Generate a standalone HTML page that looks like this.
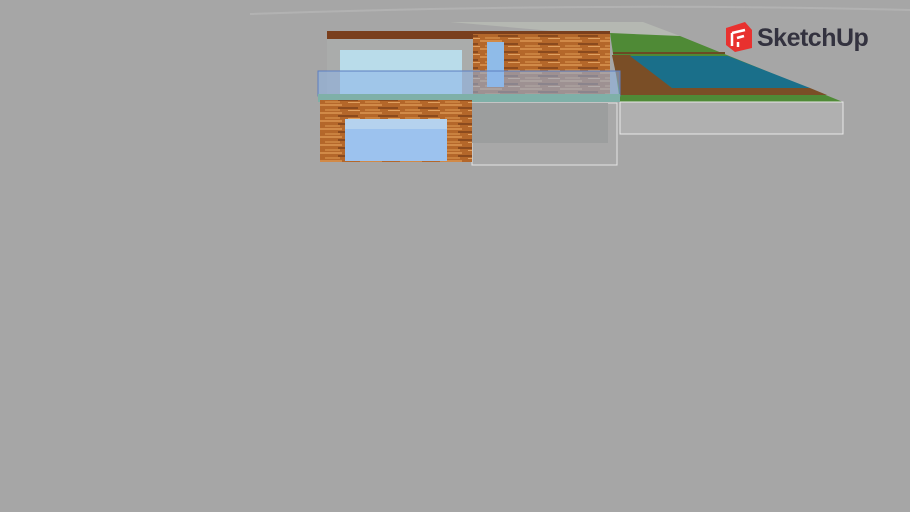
<!DOCTYPE html>
<html><head><style>
html,body{margin:0;padding:0;width:910px;height:512px;overflow:hidden;background:#a6a6a6;}
svg{position:absolute;left:0;top:0}
.logo{position:absolute;left:757px;top:24px;font:bold 25px "Liberation Sans",sans-serif;color:#33323f;letter-spacing:-0.5px}
</style></head><body>
<svg width="910" height="512">
<defs>
<pattern id="wood" width="40" height="8" patternUnits="userSpaceOnUse">
<rect width="40" height="8" fill="#b4672a"/>
<rect x="0" y="0" width="22" height="2" fill="#d18a48"/>
<rect x="18" y="3" width="20" height="2" fill="#8a4a1e"/>
<rect x="5" y="5" width="15" height="2" fill="#c9813f"/>
<rect x="28" y="6" width="12" height="1" fill="#e0a060"/>
</pattern>
</defs>
<path d="M250 14 Q600 2 910 10" stroke="#b2b2b2" stroke-width="2" fill="none"/>
<!-- back slab -->
<polygon points="450,22 643,22 680,36 610,36" fill="#b5b8b2"/>
<!-- grass -->
<polygon points="610,33 680,36 843,102 620,102" fill="#4f8a36"/>
<line x1="613" y1="53" x2="725" y2="53" stroke="#6b4a24" stroke-width="2"/>
<!-- deck wedge -->
<polygon points="612,55 630,55 672,88 620,93" fill="#7a4e26"/>
<!-- strip below pool -->
<polygon points="620,88 810,88 827,95 620,95" fill="#7a4e26"/>
<!-- pool -->
<polygon points="630,56 728,56 810,88 672,88" fill="#1a6f8a"/>
<!-- base side -->
<polygon points="620,102 843,102 843,134 620,134" fill="#b0b0b0" stroke="#e8e8e8"/>
<!-- lower right box -->
<polygon points="472,103 617,103 617,165 472,165" fill="#a8a8a8" stroke="#e4e4e4"/>
<rect x="472" y="103" width="136" height="40" fill="#9c9e9e"/>
<!-- upper left block -->
<rect x="327" y="33" width="146" height="67" fill="#aaacab"/>
<rect x="327" y="31" width="146" height="8" fill="#7a3f1d"/>
<rect x="340" y="50" width="122" height="48" fill="#b9dcea"/>
<!-- upper right wood -->
<rect x="473" y="31" width="137" height="65" fill="url(#wood)"/>
<rect x="473" y="31" width="137" height="3" fill="#7a3f1d"/>
<rect x="487" y="42" width="17" height="45" fill="#8fbbe8"/>
<!-- glass rail -->
<rect x="318" y="71" width="302" height="25" fill="#8cb4e8" fill-opacity="0.55" stroke="#5d7fc0"/>
<!-- floor slab -->
<polygon points="318,94 620,94 620,102 318,102" fill="#7fb0a8"/>
<!-- lower wood -->
<rect x="320" y="100" width="152" height="62" fill="url(#wood)"/>
<rect x="345" y="119" width="102" height="42" fill="#9cc2ee"/>
<rect x="345" y="119" width="102" height="10" fill="#b5d2ee"/>
</svg>
<svg width="910" height="512">
<polygon points="726,28 745,22 752,30 752,48 735,52 726,45" fill="#e8312f"/>
<path d="M732 33 L745 30 M732 33 L732 46 M737 38 L744 36 M738 42 L738 47" stroke="#fff" stroke-width="2.5" fill="none"/>
</svg>
<div class="logo">SketchUp</div>
</body></html>
